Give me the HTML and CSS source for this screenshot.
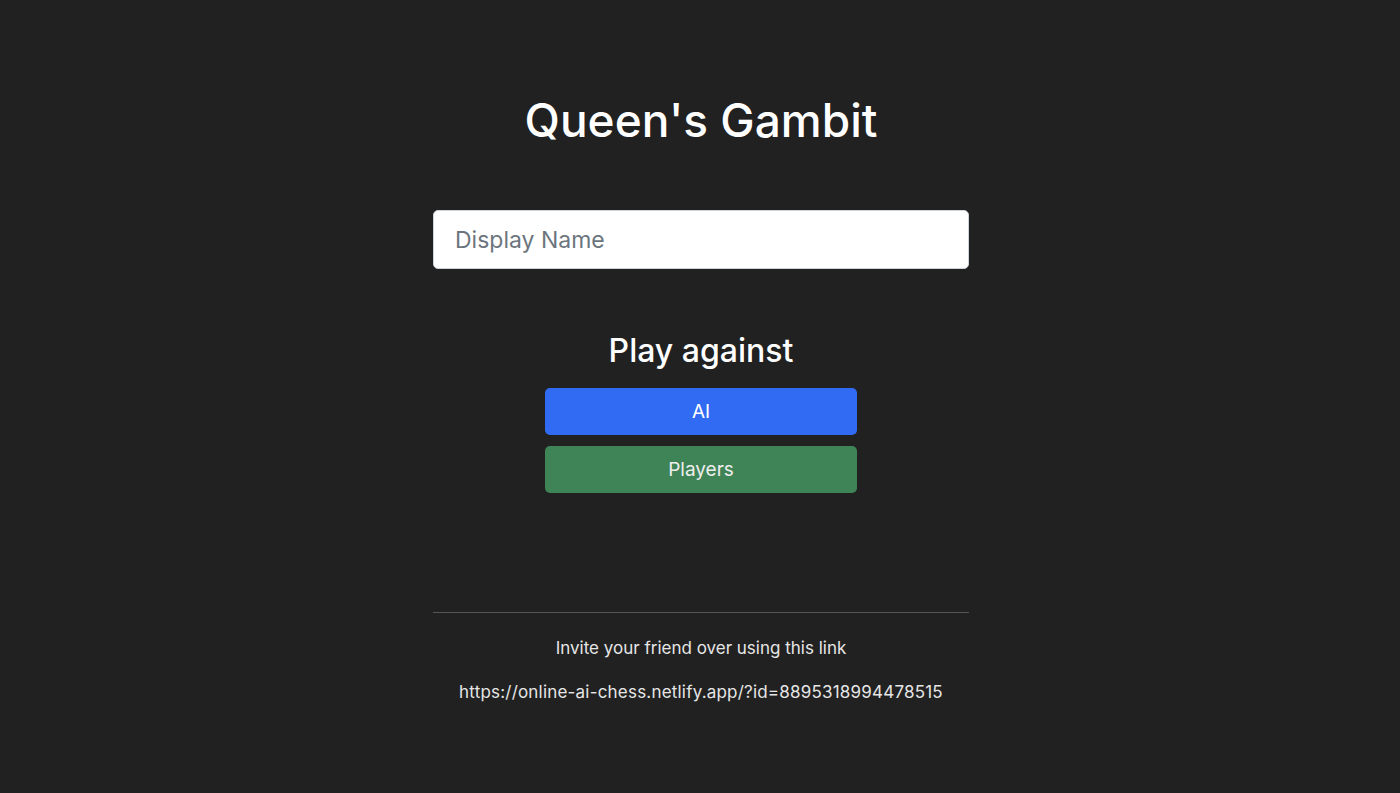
FILE: index.html
```html
<!DOCTYPE html>
<html lang="en">
<head>
  <meta charset="UTF-8">
  <title>Queen's Gambit</title>
  <link rel="stylesheet" href="styles.css">
</head>
<body>

<div class="lobby">
  <h1 class="title">Queen's Gambit</h1>

  <input type="text" id="displayName" class="name-input" placeholder="Display Name">

  <div class="mode-picker">
    <h2>Play against</h2>
    <button class="btn btn-ai">AI</button>
    <button class="btn btn-players">Players</button>
  </div>

  <hr class="divider">

  <div class="invite">
    <p>Invite your friend over using this link</p>
    <p class="invite-link">https://online-ai-chess.netlify.app/?id=8895318994478515</p>
  </div>
</div>

</body>
</html>
```

FILE: styles.css
```css
body {
  font-family: Inter, "Noto Sans", sans-serif;
  background: #212121;
  color: #fff;
  margin: 0;
  padding-left: 2px;
}

.lobby {
  width: 536px;
  margin: 0 auto;
  padding-top: 90px;
  display: flex;
  flex-direction: column;
  align-items: center;
}

.title {
  font-size: 46px;
  font-weight: 500;
  margin: 0;
  line-height: 60px;
}

.name-input {
  box-sizing: border-box;
  width: 100%;
  height: 59px;
  margin-top: 60px;
  padding: 0 21px;
  border: 1px solid #ced4da;
  border-radius: 5px;
  font-family: inherit;
  font-size: 23px;
  color: #212529;
}

.name-input::placeholder {
  color: #6c757d;
}

.mode-picker {
  margin-top: 60px;
  width: 312px;
  display: flex;
  flex-direction: column;
  align-items: center;
  gap: 11px;
}

.mode-picker h2 {
  font-size: 32px;
  font-weight: 500;
  margin: 0 0 4px;
  line-height: 44px;
}

.btn {
  width: 100%;
  height: 47px;
  border: none;
  border-radius: 5px;
  font-family: inherit;
  font-size: 19px;
  color: #fff;
  cursor: pointer;
}

.btn-ai {
  background: #316bf3;
}

.btn-players {
  background: #3e8456;
  color: #eee;
}

.divider {
  width: 100%;
  margin: 119px 0 0;
  border: none;
  border-top: 1px solid #555;
}

.invite {
  text-align: center;
  color: #e6e6e6;
  font-size: 17px;
}

.invite p {
  margin: 25px 0 0;
}

.invite-link {
  margin-top: 24px !important;
  letter-spacing: 0.2px;
}
```
